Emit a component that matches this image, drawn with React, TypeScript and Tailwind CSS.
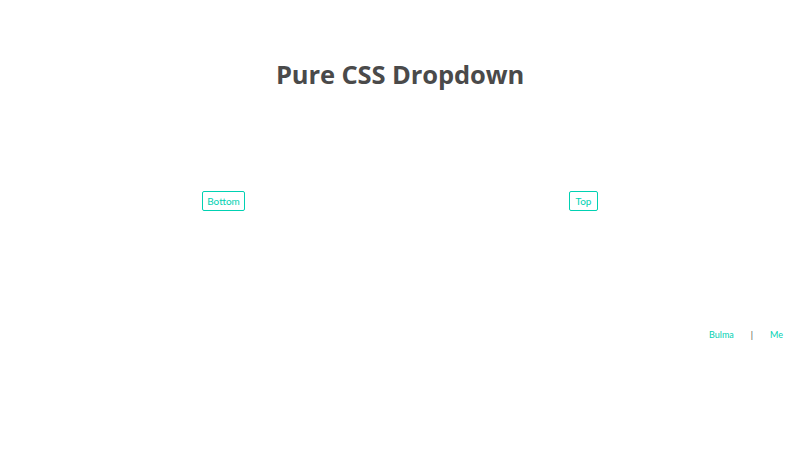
export default function App() {
  return (
    <div
      className="w-full h-[450px] bg-white text-[#4a4a4a] flex flex-col"
      style={{ fontFamily: 'Lato, "Open Sans", sans-serif' }}
    >
      <section className="pt-[52px] flex justify-center">
        <h1
          className="text-[25.5px] font-bold leading-[44px] tracking-[-0.1px]"
          style={{ fontFamily: '"Open Sans", sans-serif' }}
        >
          Pure CSS Dropdown
        </h1>
      </section>

      <section className="mt-[95px] flex">
        <div className="w-[202px]" />
        <button className="w-[43px] h-5 border border-[#00d1b2] rounded-[2px] text-[10px] leading-none text-[#00d1b2] bg-white">
          Bottom
        </button>
        <div className="w-[324px]" />
        <button className="w-[29px] h-5 border border-[#00d1b2] rounded-[2px] text-[10px] leading-none text-[#00d1b2] bg-white">
          Top
        </button>
      </section>

      <footer className="mt-[114px] flex justify-end items-center pr-[17px] text-[9px] leading-[20px]">
        <a className="text-[#00d1b2]">Bulma</a>
        <span className="mx-[17px] text-[#4a4a4a]">|</span>
        <a className="text-[#00d1b2]">Me</a>
      </footer>
    </div>
  );
}
